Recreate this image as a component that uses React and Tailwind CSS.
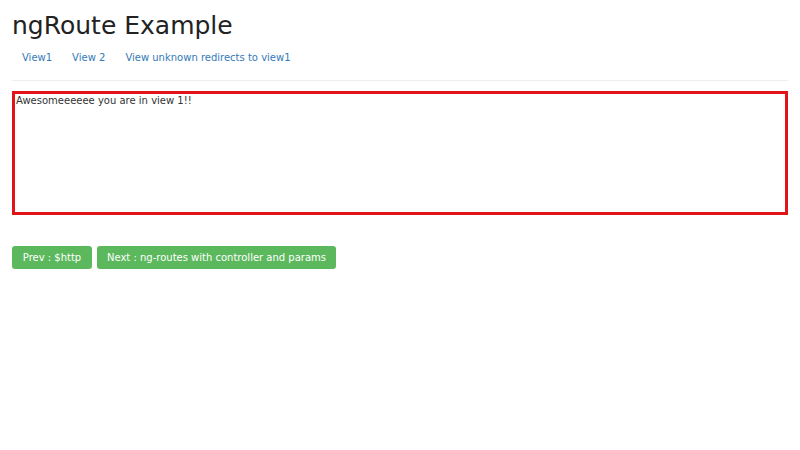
export default function App() {
  return (
    <div className="min-h-[450px] bg-white px-3 font-['DejaVu_Sans',sans-serif] text-[#333]">
      <h1 className="m-0 pt-[12px] text-[25px] leading-[28px] font-normal text-[#222]">
        ngRoute Example
      </h1>
      <ul className="mt-[12px] flex text-[10px] leading-[12px] text-[#337ab7]">
        <li className="pr-[10px] pl-[10px]">View1</li>
        <li className="px-[10px]">View 2</li>
        <li className="px-[10px]">View unknown redirects to view1</li>
      </ul>
      <hr className="mt-[16px] mb-[10px] border-t border-[#eee]" />
      <div className="h-[124px] border-[3px] border-[#e2141a] px-[1px] pt-[1px] text-[10px] leading-[12px]">
        Awesomeeeeee you are in view 1!!
      </div>
      <div className="mt-[31px] flex gap-[5px]">
        <button className="h-[23px] w-[80px] rounded-[3px] bg-[#5cb85c] text-[10px] text-white">
          Prev : $http
        </button>
        <button className="h-[23px] w-[239px] rounded-[3px] bg-[#5cb85c] text-[10px] text-white">
          Next : ng-routes with controller and params
        </button>
      </div>
    </div>
  )
}
